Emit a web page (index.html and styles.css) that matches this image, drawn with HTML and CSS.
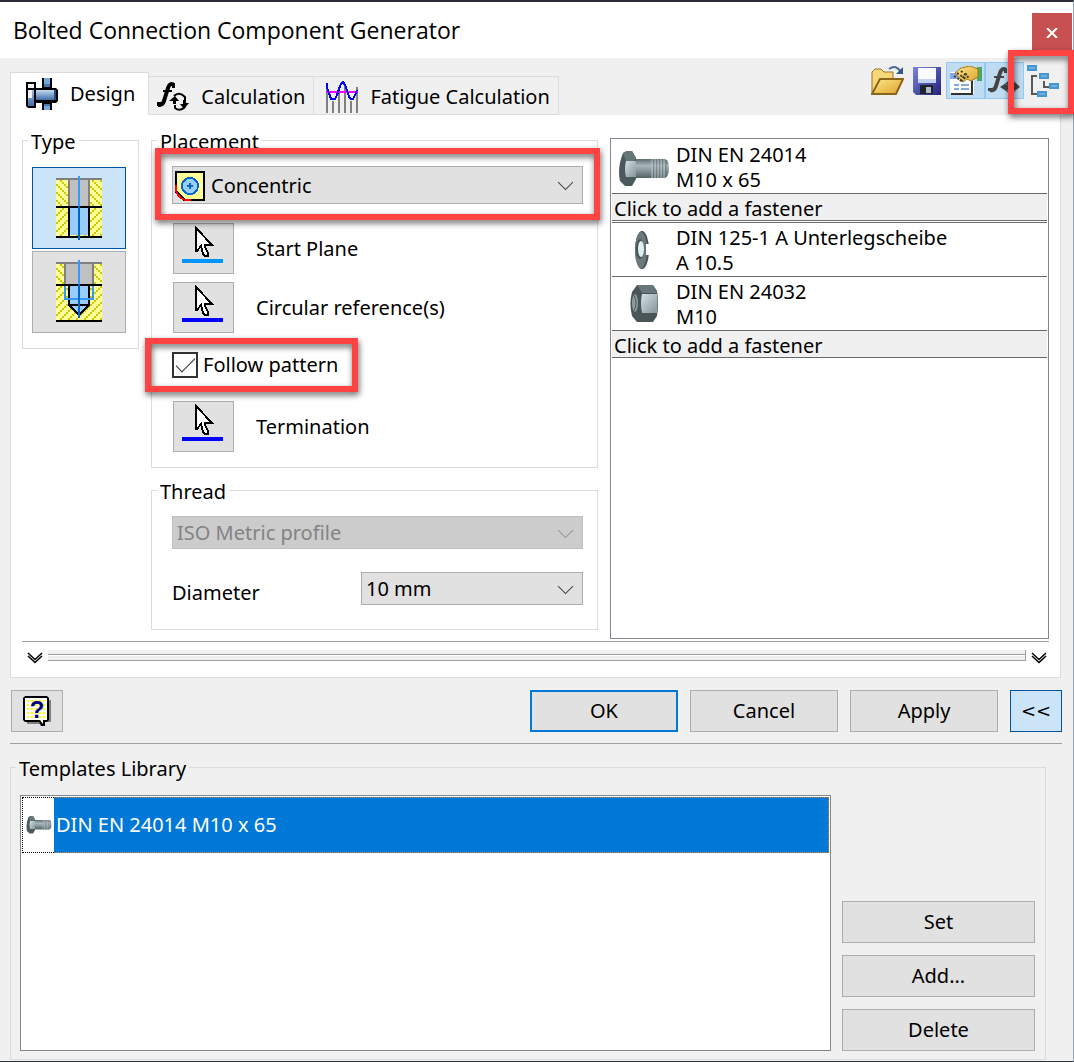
FILE: index.html
```html
<!DOCTYPE html>
<html lang="en">

<head>
    <meta charset="UTF-8">
    <meta name="viewport" content="width=device-width, initial-scale=1.0">
    <title>Bolted Connection Component Generator</title>
    <link rel="stylesheet" href="styles.css">
</head>

<body>
    <!-- Shared drawings -->
    <svg class="defs" width="0" height="0" aria-hidden="true">
        <defs>
            <pattern id="hatch" width="8" height="8" patternUnits="userSpaceOnUse">
                <rect width="8" height="8" fill="#ffff99" />
                <path d="M0 6h2v2H0zM2 4h2v2H2zM4 2h2v2H4zM6 0h2v2H6z" fill="#cccc00" />
            </pattern>
            <pattern id="hatchBack" width="8" height="8" patternUnits="userSpaceOnUse">
                <rect width="8" height="8" fill="#ffff99" />
                <path d="M0 0h2v2H0zM2 2h2v2H2zM4 4h2v2H4zM6 6h2v2H6z" fill="#cccc00" />
            </pattern>
            <pattern id="dots" width="8" height="8" patternUnits="userSpaceOnUse">
                <rect width="8" height="8" fill="#fff" />
                <path d="M0 0h2v2H0zM4 4h2v2H4zM0 4h2v2H0zM4 0h2v2H4z" fill="#ffff00" />
            </pattern>
            <linearGradient id="steel" x1="0" y1="0" x2="0" y2="1">
                <stop offset="0" stop-color="#5d6b6e" />
                <stop offset=".35" stop-color="#a9b9bb" />
                <stop offset="1" stop-color="#536164" />
            </linearGradient>
            <linearGradient id="face" x1="0" y1="0" x2="1" y2="1">
                <stop offset="0" stop-color="#d3e2e4" />
                <stop offset="1" stop-color="#849597" />
            </linearGradient>
            <linearGradient id="blueSteel" x1="0" y1="0" x2="0" y2="1">
                <stop offset="0" stop-color="#c4d9f0" />
                <stop offset="1" stop-color="#3f6da8" />
            </linearGradient>
            <linearGradient id="gold" x1="0" y1="0" x2="1" y2="1">
                <stop offset="0" stop-color="#ffe98c" />
                <stop offset="1" stop-color="#dda12c" />
            </linearGradient>
            <linearGradient id="disk" x1="0" y1="0" x2="1" y2="1">
                <stop offset="0" stop-color="#7b86dc" />
                <stop offset="1" stop-color="#22227a" />
            </linearGradient>
            <symbol id="bolt" viewBox="0 0 52 36">
                <path d="M17 8H47Q51 9 51 17T47 27H17Z" fill="url(#steel)" />
                <path d="M36 8v19M39 8v19M42 8v19M45 8v19M48 9v17" stroke="#66757a" fill="none" />
                <path d="M34 8v19M37 8v19M40 8v19M43 8v19M46 8v19" stroke="#b9c6c8" fill="none" />
                <path d="M5 2 9 0H14L18 7V28L14 35H7L2 30Q-1 17 5 2Z" fill="#4d5a5d" />
                <path d="M5 2 9 0H14L18 7 16 10H8Z" fill="#65757a" />
                <path d="M8 10H18V26H8Q6 18 8 10Z" fill="url(#face)" />
            </symbol>
            <symbol id="cursor" viewBox="0 0 41 33">
                <path d="M14 2V25H15L19 20L21 28L23 30H26V27L23 21V19H30Z" fill="#fff" stroke="#000" stroke-width="2" shape-rendering="crispEdges" />
            </symbol>
            <symbol id="expand" viewBox="0 0 16 12">
                <path d="M1 1 8 7.500 15 1M1 4 8 10.500 15 4" fill="none" stroke="#000" stroke-width="1.500" />
            </symbol>
        </defs>
    </svg>

    <div class="dialog">
        <header class="title-bar">
            <h1>Bolted Connection Component Generator</h1>
            <button type="button" class="close-btn" aria-label="Close">
                <svg width="12" height="10" viewBox="0 0 12 10" aria-hidden="true">
                    <path d="M1 0 11 10M11 0 1 10" stroke="#fff" stroke-width="2" />
                </svg>
            </button>
        </header>

        <main class="content">
            <!-- Tabs and toolbar -->
            <div class="top-row">
                <div class="tabs" role="tablist">
                    <button type="button" class="tab active" role="tab" aria-selected="true">
                        <svg width="32" height="32" viewBox="0 0 32 32" aria-hidden="true">
                            <path d="M16 0h10v10H16zM16 24h10v8H16z" fill="#000" />
                            <path d="M18 0h6v9h-6zM18 26h6v6h-6z" fill="#72aadd" />
                            <path d="M18 6h6v3h-6zM18 26h6v2h-6z" fill="#4679ae" />
                            <path d="M0 4h10v6h20l2 2v11l-2 2H10v5H2l-2-2z" fill="#000" />
                            <path d="M2 6h6v22H2z" fill="url(#blueSteel)" />
                            <path d="M2 6h6v4H2zM2 12h4v8H2z" fill="#edf2f8" />
                            <path d="M2 10h8v2H2z" fill="#000" />
                            <path d="M10 12h18v10H10z" fill="url(#blueSteel)" />
                            <path d="M28 12h2v10h-2z" fill="#254c7c" />
                        </svg>
                        Design
                    </button>
                    <button type="button" class="tab" role="tab" aria-selected="false">
                        <svg width="32" height="30" viewBox="0 0 32 30" aria-hidden="true">
                            <path d="M17 3Q13 0 11 6L7 19Q6 23 1 23" fill="none" stroke="#000" stroke-width="4" />
                            <path d="M6 8h9v2H6zM15 2h3v4h-3zM0 20h4v4H0z" fill="#000" />
                            <path d="M17 14Q22 9 28 15V18M28 25Q23 30 18 26V23" fill="none" stroke="#000" stroke-width="2" />
                            <path d="M18 14 22 19H19V22H16V19H12ZM27 27 23 22H26V18H29V21H32Z" fill="#000" />
                        </svg>
                        Calculation
                    </button>
                    <button type="button" class="tab" role="tab" aria-selected="false">
                        <svg width="32" height="32" viewBox="0 0 32 32" shape-rendering="crispEdges" aria-hidden="true">
                            <path d="M0 4h2v28H0zM6 20h2v12H6zM12 12h2v20h-2zM18 4h2v28h-2zM24 20h2v12h-2zM30 6h2v26h-2z" fill="#808080" />
                            <path d="M0 10h32v2H0z" fill="#ff00ff" />
                            <path d="M1 2V7L3 12L5 18H9L11 14L13 8L15 3L17 1L19 4L21 9L23 16L25 18H27L29 14L31 9" fill="none" stroke="#0000ff" stroke-width="2" />
                        </svg>
                        Fatigue Calculation
                    </button>
                </div>

                <div class="toolbar">
                    <button type="button" class="tool" aria-label="Open">
                        <svg width="33" height="30" viewBox="0 0 33 30" aria-hidden="true">
                            <path d="M1 27V6L4 3H10L13 6H22V12" fill="#f7d878" stroke="#9a7527" />
                            <path d="M1 28 9 13H32L25 28Z" fill="url(#gold)" stroke="#8b6517" stroke-width="2" />
                            <path d="M18 3Q25-2 30 6" fill="none" stroke="#4b6c95" stroke-width="2" />
                            <path d="M25 8H32V1Z" fill="#315987" />
                        </svg>
                    </button>
                    <button type="button" class="tool" aria-label="Save">
                        <svg width="28" height="28" viewBox="0 0 28 28" aria-hidden="true">
                            <path d="M0 0h28v28H3l-3-3z" fill="url(#disk)" />
                            <path d="M5 1h18v14H5z" fill="#fafbff" />
                            <path d="M5 12h18v4H5z" fill="#c3d1f3" />
                            <path d="M7 18h13v9H7z" fill="#22242d" />
                            <path d="M9 20h9v6H9z" fill="#aebdcb" />
                            <path d="M9 20h4v6H9z" fill="#20222a" />
                        </svg>
                    </button>
                    <button type="button" class="tool pressed" aria-label="Properties" aria-pressed="true">
                        <svg width="33" height="30" viewBox="0 0 33 30" aria-hidden="true">
                            <path d="M1 6h24v22H1z" fill="#fff" />
                            <path d="M1 7h8v6H1z" fill="#84a9ee" />
                            <path d="M24 13v16H2v-2h20V13z" fill="#333" />
                            <path d="M5 19h5M12 19h8M5 23h5M12 23h8" stroke="#84a9dd" stroke-width="2" />
                            <path d="M28 1h5v14h-5z" fill="#4ba65f" />
                            <path d="M6 7 12 2 21 0 29 3V11L22 15 18 13 14 16Z" fill="url(#gold)" stroke="#a17a1d" />
                            <path d="M8 7l9 6M12 5l8 7M5 10l10 6M11 15l8-9" stroke="#463d20" stroke-width="2" stroke-dasharray="2 2" />
                        </svg>
                    </button>
                    <button type="button" class="tool pressed" aria-label="Calculation results" aria-pressed="true">
                        <svg width="33" height="28" viewBox="0 0 33 28" aria-hidden="true">
                            <path d="M18 3Q14 0 12 6L8 19Q7 24 2 23" fill="none" stroke="#454545" stroke-width="4" />
                            <path d="M6 9h10v2H6zM0 21h4v3H0zM16 2h3v4h-3z" fill="#454545" />
                            <path d="m23 11 4 4 5 5-4 3-5 5-5-4-6-4 6-4z" fill="#454545" />
                            <path d="M18 17l10 8M19 24l8-9" stroke="#8497a5" stroke-dasharray="2 3" />
                        </svg>
                    </button>
                    <button type="button" class="tool marked" aria-label="Templates library">
                        <svg width="33" height="32" viewBox="0 0 33 32" shape-rendering="crispEdges" aria-hidden="true">
                            <path d="M10 11H5V29H11M17 16V22H22" fill="none" stroke="#585858" stroke-width="2" />
                            <path d="M0 0h10v6H0zM12 8h10v6H12zM22 18h10v6H22zM10 26h10v6H10z" fill="#4896cf" />
                            <path d="M2 2h6v2H2zM14 10h6v2H14zM24 20h6v2H24zM12 28h6v2H12z" fill="#68b2e3" />
                        </svg>
                    </button>
                </div>
            </div>

            <section class="panel">
                <div class="columns">
                    <!-- Type -->
                    <fieldset class="type-group">
                        <legend>Type</legend>
                        <button type="button" class="type-btn selected" aria-label="Through all" aria-pressed="true">
                            <svg width="46" height="64" viewBox="0 0 46 64" shape-rendering="crispEdges" aria-hidden="true">
                                <path d="M0 3h46v28H0z" fill="url(#hatchBack)" />
                                <path d="M0 31h46v30H0z" fill="url(#hatch)" />
                                <path d="M13 3h20v28H13z" fill="#c0c0c0" />
                                <path d="M0 2h46v2H0zM12 4h2v26h-2zM32 4h2v26h-2z" fill="#808080" />
                                <path d="M13 31h20v28H13z" fill="#99ccff" />
                                <path d="M0 30h46v2H0zM0 60h46v2H0zM12 32h2v28h-2zM32 32h2v28h-2z" fill="#000" />
                                <path d="M22 0h2v64h-2z" fill="#0066cc" />
                                <path d="M22 0h2v30h-2z" fill="#3399ff" />
                            </svg>
                        </button>
                        <button type="button" class="type-btn" aria-label="Blind" aria-pressed="false">
                            <svg width="46" height="64" viewBox="0 0 46 64" shape-rendering="crispEdges" aria-hidden="true">
                                <path d="M0 3h46v22H0z" fill="url(#hatchBack)" />
                                <path d="M0 25h46v36H0z" fill="url(#hatch)" />
                                <path d="M9 3h28v22H9z" fill="#c0c0c0" />
                                <path d="M0 2h46v2H0zM8 4h2v20H8zM36 4h2v20h-2z" fill="#808080" />
                                <path d="M13 25h20v20L23 55 13 45z" fill="#99ccff" stroke="#000" stroke-width="2" />
                                <path d="M9 26v13h28V26" fill="none" stroke="#3399ff" stroke-width="2" />
                                <path d="M0 24h46v2H0zM0 60h46v2H0zM12 44h22v2H12z" fill="#000" />
                                <path d="M22 0h2v58h-2z" fill="#0066cc" />
                                <path d="M22 0h2v24h-2z" fill="#3399ff" />
                            </svg>
                        </button>
                    </fieldset>

                    <div class="settings">
                        <!-- Placement -->
                        <fieldset class="placement-group">
                            <legend>Placement</legend>
                            <div class="select-box with-icon marked">
                                <select aria-label="Placement">
                                    <option>Concentric</option>
                                </select>
                                <svg class="select-icon" width="30" height="30" viewBox="0 0 30 30" shape-rendering="crispEdges" aria-hidden="true">
                                    <path d="M0 0h30v30H8L0 22z" fill="#000" />
                                    <path d="M2 2h26v26H10L2 20z" fill="#ffff99" />
                                    <path d="M1 14V20L3 24L6 27L10 29H16" fill="none" stroke="#ff0000" stroke-width="2" />
                                    <circle cx="15" cy="15" r="8" fill="#99ccff" stroke="#0066cc" stroke-width="2" />
                                    <path d="M12 14h6v2h-6zM14 12h2v6h-2z" fill="#0066cc" />
                                </svg>
                            </div>
                            <div class="pick-row">
                                <button type="button" class="pick-btn light" id="startPlane"><svg width="41" height="33" aria-hidden="true"><use href="#cursor" /></svg></button>
                                <label for="startPlane">Start Plane</label>
                            </div>
                            <div class="pick-row">
                                <button type="button" class="pick-btn" id="circularRef"><svg width="41" height="33" aria-hidden="true"><use href="#cursor" /></svg></button>
                                <label for="circularRef">Circular reference(s)</label>
                            </div>
                            <label class="check-row marked">
                                <input type="checkbox" checked>
                                Follow pattern
                            </label>
                            <div class="pick-row">
                                <button type="button" class="pick-btn" id="termination"><svg width="41" height="33" aria-hidden="true"><use href="#cursor" /></svg></button>
                                <label for="termination">Termination</label>
                            </div>
                        </fieldset>

                        <!-- Thread -->
                        <fieldset class="thread-group">
                            <legend>Thread</legend>
                            <div class="select-box disabled">
                                <select aria-label="Thread profile" disabled>
                                    <option>ISO Metric profile</option>
                                </select>
                            </div>
                            <div class="diameter-row">
                                <label for="diameter">Diameter</label>
                                <div class="select-box">
                                    <select id="diameter">
                                        <option>10 mm</option>
                                    </select>
                                </div>
                            </div>
                        </fieldset>
                    </div>

                    <!-- Fasteners -->
                    <div class="fasteners">
                        <div class="fastener">
                            <svg width="52" height="40" aria-hidden="true"><use href="#bolt" y="4" width="52" height="36" /></svg>
                            <p>DIN EN 24014<br>M10 x 65</p>
                        </div>
                        <button type="button" class="add-fastener">Click to add a fastener</button>
                        <div class="fastener-stack">
                            <div class="fastener">
                                <svg width="52" height="40" viewBox="0 0 52 40" aria-hidden="true">
                                    <ellipse cx="24" cy="20" rx="7" ry="19" fill="#465255" />
                                    <ellipse cx="23" cy="20" rx="6" ry="18" fill="#6b797c" />
                                    <ellipse cx="22" cy="19" rx="4" ry="10" fill="#475357" />
                                    <ellipse cx="23" cy="19" rx="3" ry="8" fill="#dfeeee" />
                                    <path d="M28 14h4v11h-4z" fill="#fff" />
                                </svg>
                                <p>DIN 125-1 A Unterlegscheibe<br>A 10.5</p>
                            </div>
                            <div class="fastener">
                                <svg width="52" height="38" viewBox="0 0 52 38" aria-hidden="true">
                                    <path d="M19 0H35L39 6Q41 18 39 31L35 37H19L14 31Q11 18 14 7Z" fill="#4a5558" />
                                    <path d="M19 0H35L39 8H24Z" fill="#69767a" />
                                    <path d="M24 9H39Q40 18 39 28H24Q22 18 24 9Z" fill="url(#face)" />
                                    <ellipse cx="17" cy="18" rx="3" ry="9" fill="#8c9c9f" />
                                    <path d="M16 10q4 8 0 16" stroke="#4f5a5e" fill="none" />
                                </svg>
                                <p>DIN EN 24032<br>M10</p>
                            </div>
                        </div>
                        <button type="button" class="add-fastener">Click to add a fastener</button>
                    </div>
                </div>

                <div class="splitter">
                    <svg width="16" height="12" aria-hidden="true"><use href="#expand" /></svg>
                    <div class="splitter-bar"></div>
                    <svg width="16" height="12" aria-hidden="true"><use href="#expand" /></svg>
                </div>
            </section>

            <!-- Dialog buttons -->
            <div class="actions">
                <button type="button" class="btn small help" aria-label="Help">
                    <svg width="28" height="30" viewBox="0 0 28 30" aria-hidden="true">
                        <path d="M4 4h24v22h-6v4h-4v-2H4z" fill="#808080" />
                        <path d="M2 0h22l2 2v22l-2 2h-2v4h-4l-2-4H2l-2-2V2z" fill="#000" />
                        <path d="M2 2h22v22h-4v4l-3-4H2z" fill="url(#dots)" />
                        <text class="help-mark" x="14" y="22" text-anchor="middle">?</text>
                    </svg>
                </button>
                <button type="button" class="btn primary">OK</button>
                <button type="button" class="btn">Cancel</button>
                <button type="button" class="btn">Apply</button>
                <button type="button" class="btn small toggled">&lt;&lt;</button>
            </div>

            <!-- Templates Library -->
            <fieldset class="library">
                <legend>Templates Library</legend>
                <ul class="template-list" role="listbox" aria-label="Templates">
                    <li role="option" aria-selected="true">
                        <span class="template-icon"><svg width="26" height="18" aria-hidden="true"><use href="#bolt" /></svg></span>
                        <span class="template-name">DIN EN 24014 M10 x 65</span>
                    </li>
                </ul>
                <div class="library-buttons">
                    <button type="button" class="btn">Set</button>
                    <button type="button" class="btn">Add...</button>
                    <button type="button" class="btn">Delete</button>
                </div>
            </fieldset>
        </main>
    </div>
</body>

</html>
```
FILE: styles.css
```css
* {
    box-sizing: border-box;
}

body {
    margin: 0;
    font-family: Tahoma, "Noto Sans", sans-serif;
    font-size: 20px;
    line-height: 24px;
    color: #000;
    background-color: #f0f0f0;
}

button,
select,
input {
    font: inherit;
    color: inherit;
    margin: 0;
    padding: 0;
}

svg {
    display: block;
    flex: none;
}

.defs {
    position: absolute;
}

fieldset {
    min-width: 0;
    margin: 0;
    border: 1px solid #dcdcdc;
}

legend {
    padding: 4px 3px 0;
    line-height: 20px;
}

.dialog {
    min-height: 100vh;
    border-top: 2px solid #2b2d36;
    border-right: 1px solid #9aa7b3;
    border-bottom: 1px solid #2b3340;
}

/* Title bar */
.title-bar {
    display: flex;
    justify-content: space-between;
    align-items: center;
    height: 56px;
    padding: 0 1px 0 13px;
    background-color: #fff;
}

h1 {
    margin: 0;
    font-family: "Segoe UI", "Open Sans", sans-serif;
    font-size: 23px;
    font-weight: normal;
}

.close-btn {
    display: flex;
    justify-content: center;
    align-items: center;
    align-self: flex-start;
    width: 40px;
    height: 40px;
    margin-top: 11px;
    border: none;
    background-color: #c75050;
}

.content {
    padding: 0 12px 1px 10px;
}

/* Tabs */
.top-row {
    display: flex;
    justify-content: space-between;
    height: 57px;
    margin-right: -2px;
}

.tabs {
    display: flex;
    align-items: flex-end;
}

.tab {
    display: flex;
    align-items: center;
    gap: 12px;
    height: 39px;
    padding: 2px 8px 0;
    border: 1px solid #dcdcdc;
    border-left: none;
    background-color: #f0f0f0;
}

.tab:last-child {
    padding-left: 12px;
}

.tab.active {
    height: 43px;
    padding: 0 13px 1px 15px;
    border-left: 1px solid #dcdcdc;
    border-bottom: none;
    background-color: #fff;
}

/* Toolbar */
.toolbar {
    display: flex;
    padding-top: 4px;
}

.tool {
    display: flex;
    justify-content: center;
    align-items: center;
    width: 39px;
    height: 37px;
    border: 1px solid transparent;
    background-color: transparent;
}

.tool.pressed {
    border-color: #90c8f6;
    background-color: #c0dcf3;
}

/* Red callout frames */
.marked {
    position: relative;
}

.marked::before {
    content: "";
    position: absolute;
    z-index: 1;
    inset: -18px -17px -16px;
    border: 6px solid #ff4343;
    filter: drop-shadow(1px 3px 3px rgba(0, 0, 0, 0.6));
    pointer-events: none;
}

.tool.marked::before {
    inset: -13px -12px -16px -17px;
}

.check-row.marked::before {
    inset: -14px -20px -14px -27px;
}

/* Main panel */
.panel {
    padding: 13px 11px 10px;
    border: 1px solid #dcdcdc;
    border-top: none;
    background-color: #fff;
}

.columns {
    display: grid;
    grid-template-columns: 117px 447fr 439fr;
    gap: 12px;
}

.type-group {
    align-self: start;
    display: flex;
    flex-direction: column;
    gap: 2px;
    padding: 15px 12px 15px 9px;
}

.type-group legend {
    margin-left: -4px;
}

.type-btn {
    display: flex;
    justify-content: center;
    align-items: center;
    height: 82px;
    border: 1px solid #adadad;
    background-color: #e1e1e1;
}

.type-btn.selected {
    border-color: #005499;
    background-color: #cce4f7;
}

.settings {
    display: flex;
    flex-direction: column;
    gap: 10px;
    padding-bottom: 9px;
}

.placement-group,
.thread-group {
    padding: 14px 14px 15px 20px;
}

.placement-group legend,
.thread-group legend {
    margin-left: -15px;
}

.thread-group {
    padding-bottom: 24px;
}

.select-box {
    position: relative;
}

.select-box select {
    display: block;
    width: 100%;
    height: 33px;
    padding: 1px 30px 0 4px;
    border: 1px solid #adadad;
    border-radius: 0;
    background-color: #e1e1e1;
    appearance: none;
}

.select-box::after {
    content: "";
    position: absolute;
    top: calc(50% - 8px);
    right: 12px;
    width: 10px;
    height: 10px;
    border: solid #444;
    border-width: 0 1px 1px 0;
    transform: rotate(45deg);
    pointer-events: none;
}

.select-box.with-icon select {
    height: 38px;
    padding-top: 2px;
    padding-left: 38px;
}

.select-box.disabled select {
    border-color: #bfbfbf;
    background-color: #ccc;
    color: #838383;
    opacity: 1;
}

.select-box.disabled::after {
    border-color: #999;
}

.select-icon {
    position: absolute;
    top: 5px;
    left: 3px;
}

.pick-row {
    display: flex;
    align-items: center;
    gap: 22px;
    margin-top: 8px;
    padding-left: 1px;
}

.select-box + .pick-row {
    margin-top: 19px;
}

.pick-btn {
    width: 61px;
    height: 51px;
    padding: 1px 10px 9px 8px;
    border: 1px solid #adadad;
    background-color: #e1e1e1;
}

.pick-btn::after {
    content: "";
    display: block;
    height: 4px;
    background-color: #0000ff;
}

.pick-btn.light::after {
    background-color: #0094ff;
}

.check-row {
    display: flex;
    align-items: center;
    gap: 5px;
    width: max-content;
    margin: 19px 0 23px;
}

.check-row input {
    width: 26px;
    height: 26px;
    border: 2px solid #333;
    background-color: #fff;
    appearance: none;
}

.check-row input:checked::after {
    content: "";
    display: block;
    width: 8px;
    height: 18px;
    margin: -1px 0 0 7px;
    border: solid #333;
    border-width: 0 1px 1px 0;
    transform: rotate(45deg);
}

.diameter-row {
    display: grid;
    grid-template-columns: 189fr 222fr;
    align-items: end;
    margin-top: 23px;
}

/* Fastener list */
.fasteners {
    margin-top: 10px;
    padding: 1px;
    border: 1px solid #828790;
}

.fastener {
    display: flex;
    align-items: center;
    gap: 6px;
    height: 54px;
    padding-left: 6px;
    border-bottom: 1px solid #696969;
    line-height: 25px;
}

.fastener p {
    margin: 0;
}

.add-fastener {
    display: block;
    width: 100%;
    height: 27px;
    padding: 3px 0 0 2px;
    border: none;
    border-bottom: 1px solid #696969;
    background-color: #f0f0f0;
    text-align: left;
}

.fastener-stack {
    margin-top: 1px;
    border-top: 1px solid #696969;
}

/* Splitter under the panel */
.splitter {
    display: flex;
    align-items: flex-end;
    gap: 5px;
    margin-top: 2px;
    padding: 8px 2px 6px 5px;
    border-top: 1px solid #a0a0a0;
}

.splitter svg {
    margin-bottom: -3px;
}

.splitter-bar {
    flex: 1;
    height: 11px;
    border-right: 1px solid #a0a0a0;
    border-bottom: 1px solid #a0a0a0;
    background: linear-gradient(#f0f0f0 4px, #a0a0a0 4px, #a0a0a0 5px, #fff 5px, #fff 6px, #f0f0f0 6px);
}

/* Buttons */
.btn {
    width: 148px;
    height: 42px;
    border: 1px solid #adadad;
    background-color: #e1e1e1;
}

.btn.small {
    width: 52px;
}

.btn.primary {
    border: 2px solid #0078d7;
}

.btn.toggled {
    border-color: #005499;
    background-color: #cce4f7;
    font-family: "DejaVu Sans", sans-serif;
    font-size: 18px;
}

.btn.help {
    display: flex;
    justify-content: center;
    align-items: center;
    margin-right: auto;
}

.help-mark {
    font-family: "Liberation Sans", sans-serif;
    font-size: 24px;
    font-weight: bold;
    fill: #000080;
}

.actions {
    display: flex;
    gap: 12px;
    margin-top: 12px;
    margin-right: -1px;
    padding: 0 0 11px 1px;
    border-bottom: 1px solid #a0a0a0;
}

/* Templates library */
.library {
    display: flex;
    gap: 11px;
    margin: 11px 15px 0 0;
    padding: 16px 10px 8px 9px;
}

.library legend {
    margin-left: -4px;
}

.template-list {
    flex: 1;
    min-height: 256px;
    margin: 0;
    padding: 1px;
    border: 1px solid #828790;
    background-color: #fff;
    list-style: none;
}

.template-list li {
    display: flex;
    height: 56px;
    border: 1px dotted #d7802a;
    background-color: #0078d7;
    color: #fff;
}

.template-icon {
    display: flex;
    align-items: center;
    justify-content: flex-end;
    width: 32px;
    margin: -1px 0 -1px -1px;
    padding-right: 2px;
    border: 1px dotted #000;
    border-right: none;
    background-color: #fff;
}

.template-name {
    align-self: center;
    padding-left: 2px;
}

.library-buttons {
    display: flex;
    flex-direction: column;
    justify-content: flex-end;
    gap: 12px;
}

.library-buttons .btn {
    width: 193px;
}
```
